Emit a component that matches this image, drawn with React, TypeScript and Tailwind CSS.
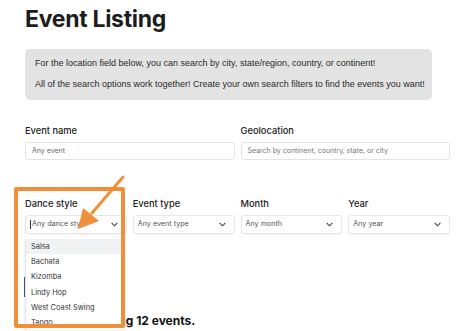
import React from "react";

const Chevron = () => (
  <svg width="7" height="5" viewBox="0 0 8 5" fill="none" className="shrink-0">
    <path d="M1 1l3 3 3-3" stroke="#444" strokeWidth="1.2" strokeLinecap="round" strokeLinejoin="round" />
  </svg>
);

const Select = ({ text, cursor }: { text: string; cursor?: boolean }) => (
  <div className="h-[19px] rounded-[3px] border border-[#e6e6e6] bg-white shadow-[0_1px_1px_rgba(0,0,0,0.04)] flex items-center justify-between pl-[4px] pr-[8px]">
    <span className="text-[7.2px] text-[#555] flex items-center">
      {cursor && <span className="inline-block w-px h-[9px] bg-[#333] mr-[1px]" />}
      {text}
    </span>
    <Chevron />
  </div>
);

export default function App() {
  const styles = ["Salsa", "Bachata", "Kizomba", "Lindy Hop", "West Coast Swing", "Tango"];
  return (
    <div className="relative w-[474px] h-[331px] overflow-hidden bg-white" style={{ fontFamily: "Inter, 'DejaVu Sans', sans-serif" }}>
      <div className="pl-[25px] pt-[4px]">
        <h1 className="text-[23px] leading-[30px] font-bold text-[#1c1c1c] tracking-[-0.3px]">Event Listing</h1>
        <div
          className="mt-[15px] w-[407px] h-[51px] rounded-[5px] bg-[#e3e3e3] pl-[10px] pt-[9px] text-[9px] text-[#2a2a2a] flex flex-col gap-[11px]"
          style={{ fontFamily: "'Liberation Sans', Arial, sans-serif" }}
        >
          <p className="leading-[10px]">For the location field below, you can search by city, state/region, country, or continent!</p>
          <p className="leading-[10px]">All of the search options work together! Create your own search filters to find the events you want!</p>
        </div>

        <div className="mt-[25px] grid grid-cols-2 gap-x-[6px] w-[425px]">
          <div className="flex flex-col">
            <label className="text-[9.3px] leading-[12px] font-medium text-[#222]">Event name</label>
            <div className="mt-[5px] h-[18px] rounded-[3px] border border-[#e4e4e4] bg-white flex items-center pl-[6px] text-[7px] text-[#666]">Any event</div>
          </div>
          <div className="flex flex-col">
            <label className="text-[9.3px] leading-[12px] font-medium text-[#222]">Geolocation</label>
            <div className="mt-[5px] h-[18px] rounded-[3px] border border-[#e4e4e4] bg-white flex items-center pl-[6px] text-[7px] text-[#777]">Search by continent, country, state, or city</div>
          </div>
        </div>

        <div className="mt-[38px] grid grid-cols-4 gap-x-[6px] w-[425px]">
          <div className="relative flex flex-col">
            <label className="text-[9.3px] leading-[12px] font-medium text-[#222]">Dance style</label>
            <div className="mt-[5px]"><Select text="Any dance style" cursor /></div>
            <div className="absolute left-0 top-[41px] w-[100px] z-10 bg-white border-l border-[#e3e3e3] shadow-[0_2px_4px_rgba(0,0,0,0.08)] flex flex-col">
              {styles.map((s, i) => (
                <div
                  key={s}
                  className={`h-[15.2px] flex items-center pl-[5px] text-[7.4px] text-[#333] ${i === 0 ? "bg-[#f1f2f4]" : ""}`}
                >
                  {s}
                </div>
              ))}
            </div>
          </div>
          <div className="flex flex-col">
            <label className="text-[9.3px] leading-[12px] font-medium text-[#222]">Event type</label>
            <div className="mt-[5px]"><Select text="Any event type" /></div>
          </div>
          <div className="flex flex-col">
            <label className="text-[9.3px] leading-[12px] font-medium text-[#222]">Month</label>
            <div className="mt-[5px]"><Select text="Any month" /></div>
          </div>
          <div className="flex flex-col">
            <label className="text-[9.3px] leading-[12px] font-medium text-[#222]">Year</label>
            <div className="mt-[5px]"><Select text="Any year" /></div>
          </div>
        </div>

        <div className="mt-[43px] ml-[-1px] w-[1.5px] h-[20px] bg-[#555]" />
        <p className="mt-[17px] text-[12px] leading-[14px] font-bold text-[#111]">Currently showing 12 events.</p>
      </div>

      {/* annotation */}
      <div className="absolute left-[14px] top-[187px] w-[111px] h-[141px] border-[4px] border-[#ef8f3a] rounded-[2px] z-20 pointer-events-none" />
      <svg className="absolute left-0 top-0 z-20 pointer-events-none" width="474" height="331" viewBox="0 0 474 331">
        <line x1="123" y1="177" x2="92" y2="213" stroke="#ef8f3a" strokeWidth="3" strokeLinecap="round" />
        <polygon points="78,229 83,208 99,221" fill="#ef8f3a" />
      </svg>
    </div>
  );
}
